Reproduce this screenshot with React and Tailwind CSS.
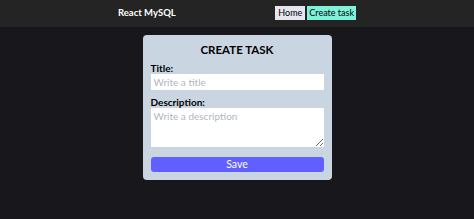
export default function App() {
  return (
    <div className="min-h-screen bg-[#18181c] font-['Lato',sans-serif]">
      {/* Navbar */}
      <nav className="bg-[#242424] h-[27px] flex items-center">
        <div className="w-[238px] mx-auto flex items-center justify-between">
          <span className="text-white font-bold text-[9.5px]">React MySQL</span>
          <div className="flex items-center gap-[2px] -mt-[1px]">
            <button className="bg-[#e6e6ee] text-black text-[9px] px-[3px] h-[14px] leading-[14px]">Home</button>
            <button className="bg-[#7ff2da] text-black text-[9px] px-[2px] h-[14px] leading-[14px]">Create task</button>
          </div>
        </div>
      </nav>

      {/* Form */}
      <div className="pt-[8px]">
        <form className="w-[189px] mx-auto bg-slate-300 rounded-[4px] px-[8px] pt-[7px] pb-[8px] flex flex-col">
          <h1 className="text-center font-bold text-[11.5px] leading-[16px] mb-[4px]">CREATE TASK</h1>
          <label className="text-[10px] font-bold leading-[12px]">Title:</label>
          <input
            type="text"
            placeholder="Write a title"
            className="bg-white h-[16px] px-[3px] text-[10px] placeholder-gray-400/80 outline-none"
          />
          <label className="text-[10px] font-bold leading-[12px] mt-[6px]">Description:</label>
          <textarea
            placeholder="Write a description"
            className="bg-white h-[39px] px-[3px] py-[1px] text-[10px] placeholder-gray-400/80 outline-none"
          />
          <button
            type="button"
            className="bg-indigo-500 text-white text-[10.5px] h-[15px] leading-[15px] rounded-[3px] mt-[10px]"
          >
            Save
          </button>
        </form>
      </div>
    </div>
  )
}
